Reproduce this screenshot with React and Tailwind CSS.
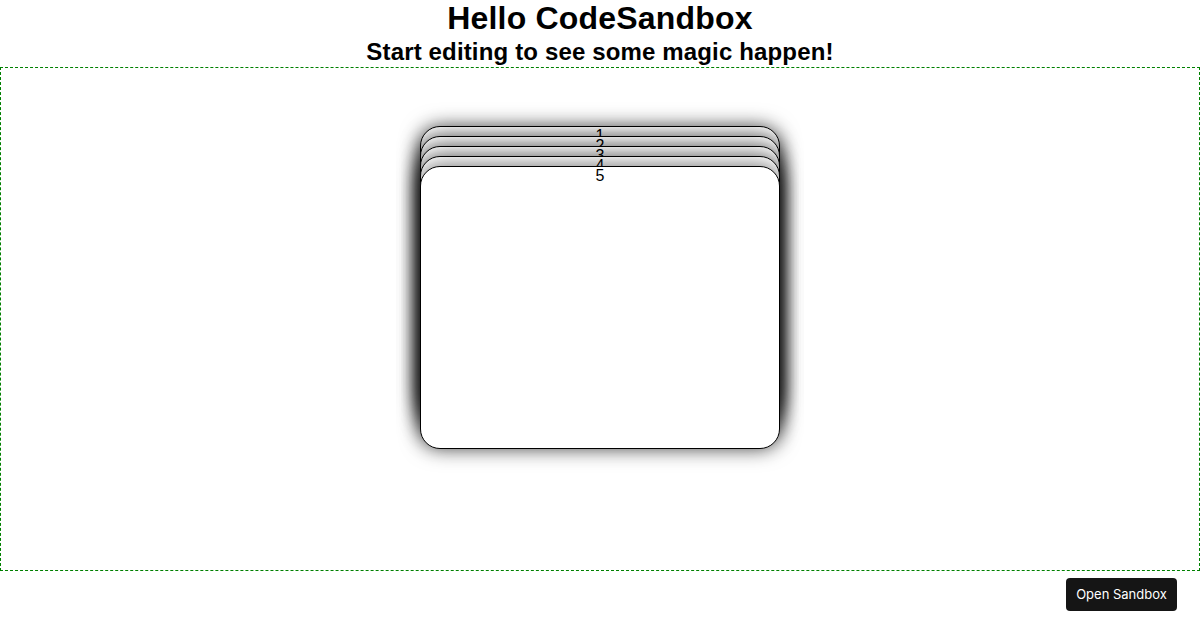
export default function App() {
  const cards = [
    { n: "1", cls: "mt-0" },
    { n: "2", cls: "mt-[10px]" },
    { n: "3", cls: "mt-[20px]" },
    { n: "4", cls: "mt-[30px]" },
    { n: "5", cls: "mt-[40px]" },
  ];
  return (
    <div className="relative w-[1200px] h-[630px] bg-white text-center text-black" style={{ fontFamily: '"Liberation Sans", Arial, sans-serif' }}>
      <h1 className="m-0 text-[32px] font-bold leading-[37px] tracking-[0.2px]">Hello CodeSandbox</h1>
      <h2 className="m-0 text-[24px] font-bold leading-[29px] tracking-[0.15px]">Start editing to see some magic happen!</h2>
      <div className="mt-[1px] h-[504px] border border-dashed border-[#008000] pt-[58px]">
        <div className="mx-auto grid w-[360px]">
          {cards.map((c) => (
            <div
              key={c.n}
              className={`col-start-1 row-start-1 ${c.cls} h-[283px] w-[360px] rounded-[20px] border border-black bg-white text-[16px] leading-[18px] shadow-[0_0_20px_rgba(0,0,0,0.6)]`}
            >
              {c.n}
            </div>
          ))}
        </div>
      </div>
      <div
        className="absolute right-[23px] bottom-[19px] flex h-[33px] w-[111px] items-center justify-center rounded-[4px] bg-[#151515] text-[13px] text-white"
        style={{ fontFamily: 'Inter, "Noto Sans", sans-serif' }}
      >
        Open Sandbox
      </div>
    </div>
  );
}
